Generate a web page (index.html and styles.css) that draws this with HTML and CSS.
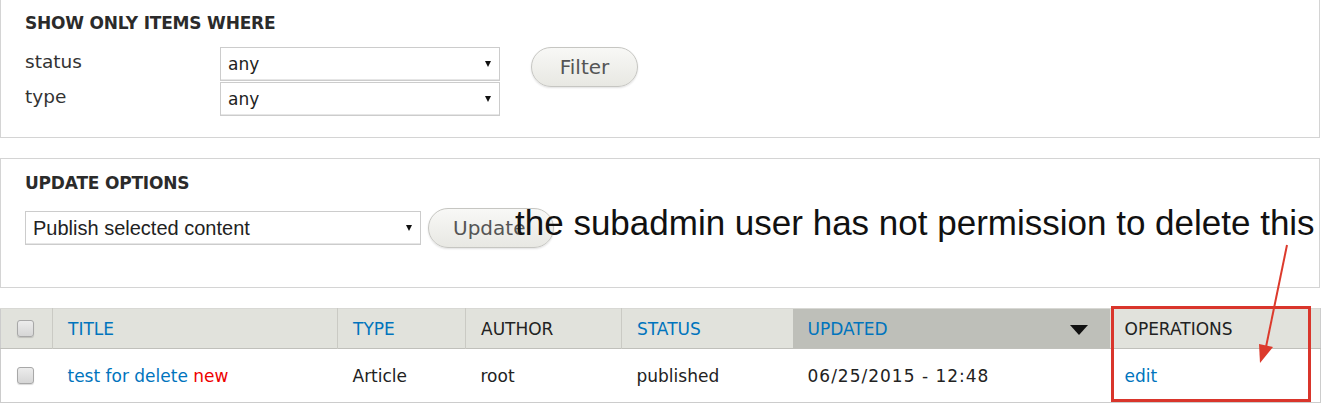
FILE: index.html
```html
<!DOCTYPE html>
<html lang="en">
<head>
<meta charset="utf-8">
<title>Content</title>
<link rel="stylesheet" href="styles.css">
</head>
<body>
<div class="page">
  <div class="panel panel-filter">
    <h2 class="panel-title">SHOW ONLY ITEMS WHERE</h2>
    <div class="filter-row">
      <div class="filter-grid">
        <label class="filter-label">status</label>
        <span class="select select-filter"><span class="select-value">any</span></span>
        <label class="filter-label">type</label>
        <span class="select select-filter"><span class="select-value">any</span></span>
      </div>
      <button class="btn btn-filter" type="button">Filter</button>
    </div>
  </div>

  <div class="panel panel-update">
    <h2 class="panel-title">UPDATE OPTIONS</h2>
    <div class="update-row">
      <span class="select select-action"><span class="select-value select-value-arial">Publish selected content</span></span>
      <button class="btn btn-update" type="button">Update</button>
    </div>
  </div>

  <table class="content-table">
    <thead>
      <tr>
        <th class="col-check"><input class="check" type="checkbox"></th>
        <th class="col-title"><a href="#">TITLE</a></th>
        <th class="col-type"><a href="#">TYPE</a></th>
        <th class="col-author">AUTHOR</th>
        <th class="col-status"><a href="#">STATUS</a></th>
        <th class="col-updated is-active"><span class="sort-cell"><a href="#">UPDATED</a><span class="sort-icon"></span></span></th>
        <th class="col-ops">OPERATIONS</th>
      </tr>
    </thead>
    <tbody>
      <tr>
        <td class="col-check"><input class="check" type="checkbox"></td>
        <td><a href="#">test for delete</a> <span class="marker">new</span></td>
        <td>Article</td>
        <td>root</td>
        <td>published</td>
        <td class="cell-date">06/25/2015 - 12:48</td>
        <td><a href="#">edit</a></td>
      </tr>
    </tbody>
  </table>

  <div class="note">the subadmin user has not permission to delete this</div>
  <div class="highlight-box"></div>
  <svg class="note-arrow" width="60" height="130" viewBox="0 0 60 130" aria-hidden="true">
    <line x1="39" y1="2" x2="18" y2="104" stroke="#dc3a2c" stroke-width="2"/>
    <polygon points="12,120 11,101 25,104" fill="#dc3a2c"/>
  </svg>
</div>
</body>
</html>
```

FILE: styles.css
```css
* { box-sizing: border-box; }

html, body {
  margin: 0;
  padding: 0;
  background: #fff;
}

body {
  font-family: "DejaVu Sans", Verdana, sans-serif;
  font-size: 17px;
  color: #222;
}

.page {
  position: relative;
  width: 1320px;
}

.panel {
  border: 1px solid #d4d4d4;
  padding: 0 24px;
  margin-bottom: 20px;
}

.panel-filter {
  border-top: 0;
  height: 138px;
}

.panel-update {
  height: 130px;
}

.panel-title {
  margin: 0;
  font-size: 17px;
  font-weight: bold;
  line-height: 22px;
  color: #2b2b2b;
  letter-spacing: -0.2px;
}

.panel-filter .panel-title { padding-top: 12px; }
.panel-update .panel-title { padding-top: 13px; }

.filter-row {
  display: flex;
  align-items: flex-start;
  margin-top: 13px;
}

.filter-grid {
  display: grid;
  grid-template-columns: 195px 280px;
  row-gap: 1px;
}

.filter-label {
  font-size: 18.5px;
  line-height: 30px;
  color: #333;
}

.select {
  position: relative;
  display: block;
  height: 34px;
  border: 1px solid #ccc;
  background: #fff;
  box-shadow: inset 0 -1px 0 #e6e6e6;
}

.select::after {
  content: "";
  position: absolute;
  right: 8px;
  top: 13px;
  border-left: 3px solid transparent;
  border-right: 3px solid transparent;
  border-top: 6px solid #111;
}

.select-value {
  display: block;
  padding-left: 7px;
  font-size: 17px;
  line-height: 32px;
  color: #222;
}

.select-value-arial {
  font-family: "Liberation Sans", Arial, sans-serif;
  font-size: 20px;
}

.select-action {
  width: 396px;
}

.btn {
  font-family: "DejaVu Sans", Verdana, sans-serif;
  font-size: 20px;
  color: #555;
  height: 40px;
  border: 1px solid #c6c6c2;
  border-radius: 20px;
  background: linear-gradient(#f8f8f6, #e8e8e3);
  box-shadow: 0 1px 2px rgba(0, 0, 0, 0.12);
  padding: 0;
  line-height: 38px;
}

.btn-filter {
  width: 107px;
  margin-left: 31px;
}

.update-row {
  display: flex;
  align-items: center;
  gap: 7px;
  margin-top: 14px;
}

.btn-update {
  width: 126px;
  text-align: left;
  padding-left: 24px;
}

/* table */
.content-table {
  width: 1320px;
  border-collapse: collapse;
  border-left: 1px solid #ccc;
  border-right: 1px solid #ccc;
  border-top: 1px solid #d8d8d4;
  border-bottom: 1px solid #ccc;
  table-layout: fixed;
}

.content-table th,
.content-table td {
  text-align: left;
  padding: 0 0 0 15px;
  font-size: 17px;
  white-space: nowrap;
}

.content-table thead tr {
  background: #e1e2dc;
  height: 40px;
  border-bottom: 1px solid #c0c0bb;
}

.content-table th {
  font-weight: normal;
  color: #222;
  border-right: 1px solid #cacac4;
}

.content-table th.col-status,
.content-table th.col-updated,
.content-table th.col-ops {
  border-right: 0;
}

.content-table tbody tr {
  height: 54px;
}

.content-table a {
  color: #0074bd;
  text-decoration: none;
}

.cell-date {
  letter-spacing: 1px;
}

.col-check { width: 52px; padding-left: 16px !important; }
.col-title { width: 285px; }
.col-type { width: 128px; }
.col-author { width: 156px; }
.col-status { width: 171px; }
.col-updated { width: 317px; }
.col-ops { width: 211px; }

.content-table th.is-active {
  background: #bebfb9;
}

.sort-cell {
  display: flex;
  align-items: center;
  justify-content: space-between;
  padding-right: 22px;
}

.sort-icon {
  width: 0;
  height: 0;
  border-left: 9px solid transparent;
  border-right: 9px solid transparent;
  border-top: 10px solid #111;
  margin-top: 2px;
}

.check {
  appearance: none;
  -webkit-appearance: none;
  margin: 0;
  display: block;
  width: 17px;
  height: 17px;
  border: 1px solid #a8a8a8;
  border-radius: 3px;
  background: linear-gradient(#ececec, #d6d6d6);
  box-shadow: 0 1px 1px rgba(0, 0, 0, 0.15);
}

.marker {
  color: #e00;
}

/* annotation overlay */
.note {
  position: absolute;
  left: 515px;
  top: 203px;
  font-family: "Liberation Sans", Arial, sans-serif;
  font-size: 35px;
  color: #111;
  white-space: nowrap;
  line-height: normal;
}

.highlight-box {
  position: absolute;
  left: 1111px;
  top: 306px;
  width: 200px;
  height: 96px;
  border: 3px solid #d9352b;
}

.note-arrow {
  position: absolute;
  left: 1248px;
  top: 243px;
}
```
